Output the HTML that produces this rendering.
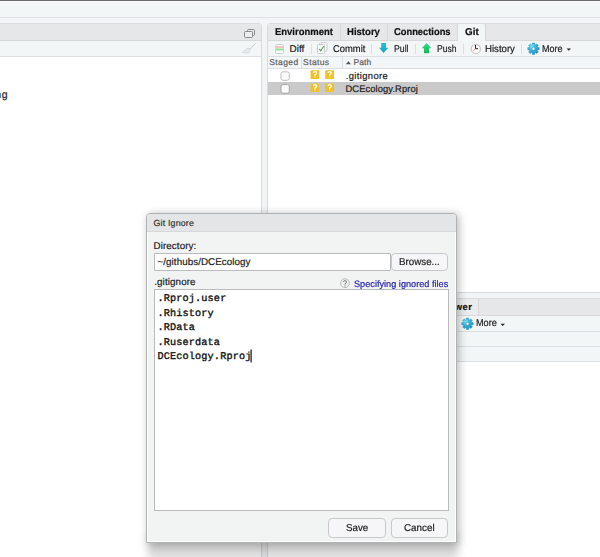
<!DOCTYPE html>
<html><head><meta charset="utf-8">
<style>
*{box-sizing:border-box;margin:0;padding:0}
html,body{width:600px;height:557px;overflow:hidden;background:#fff;font-family:"Liberation Sans",sans-serif;color:#222}
.a{position:absolute}
.t{position:absolute;white-space:pre;text-rendering:geometricPrecision;-webkit-text-stroke:0.2px currentColor}
.sep{position:absolute;width:1px;height:10px;background:#dcdfe1;top:44px}
svg{position:absolute;overflow:visible}
</style></head><body>
<!-- top toolbar -->
<div class="a" style="left:0;top:0;width:600px;height:1px;background:#6a6a6a"></div>
<div class="a" style="left:0;top:1px;width:600px;height:1px;background:#fbfcfc"></div>
<div class="a" style="left:0;top:2px;width:600px;height:15px;background:#f3f6f7"></div>
<div class="a" style="left:0;top:17px;width:600px;height:1px;background:#dfe2e4"></div>
<div class="a" style="left:0;top:18px;width:600px;height:539px;background:#f3f4f6"></div>

<!-- left pane -->
<div class="a" style="left:-4px;top:23px;width:266px;height:540px;border:1px solid #d9dbdd;border-radius:3px;background:#fff;overflow:hidden">
  <div class="a" style="left:0;top:0;width:264px;height:17px;background:#e6e7e8;border-bottom:1px solid #d6d8da"></div>
  <div class="a" style="left:0;top:17px;width:264px;height:16px;background:#f3f6f7;border-bottom:1px solid #dcdfe1"></div>
</div>
<!-- maximize icon -->
<svg style="left:0;top:0" width="600" height="60">
  <rect x="247.5" y="29.5" width="7" height="6" rx="1" fill="none" stroke="#858585" stroke-width="0.95"/>
  <rect x="244.5" y="31.5" width="8" height="6" rx="1" fill="#ededed" stroke="#858585" stroke-width="0.95"/>
  <!-- broom -->
  <path d="M255.8 43.3 L250.3 48.4" stroke="#c9d0d4" stroke-width="1" fill="none"/>
  <path d="M247 48.3 L251 48.6 L248.5 53 L242.2 52.5 Z" fill="#e4e9eb" stroke="#d2d8db" stroke-width="0.8"/>
</svg>

<!-- right pane upper -->
<div class="a" style="left:267px;top:23px;width:340px;height:270px;border:1px solid #d9dbdd;border-radius:3px;background:#fff;overflow:hidden">
  <div class="a" style="left:0;top:0;width:340px;height:17px;background:#e6e7e8;border-bottom:1px solid #d6d8da"></div>
  <!-- tab separators -->
  <div class="a" style="left:72px;top:0;width:1px;height:16px;background:#d6d8da"></div>
  <div class="a" style="left:119px;top:0;width:1px;height:16px;background:#d6d8da"></div>
  <div class="a" style="left:189px;top:0;width:1px;height:16px;background:#d6d8da"></div>
  <div class="a" style="left:190px;top:0;width:27px;height:17px;background:#f3f6f7;border-radius:2px 2px 0 0"></div>
  <div class="a" style="left:217px;top:0;width:1px;height:16px;background:#d6d8da"></div>
  <div class="a" style="left:0;top:17px;width:340px;height:16px;background:#f3f6f7;border-bottom:1px solid #dcdfe1"></div>
  <!-- header -->
  <div class="a" style="left:0;top:33px;width:340px;height:12px;background:#f3f6f7;border-bottom:1px solid #dcdfe1"></div>
  <div class="a" style="left:33px;top:33px;width:1px;height:12px;background:#dcdfe1"></div>
  <div class="a" style="left:74px;top:33px;width:1px;height:12px;background:#dcdfe1"></div>
  <!-- row 2 -->
  <div class="a" style="left:0;top:58px;width:340px;height:13px;background:#cacaca"></div>
</div>
<div class="sep" style="left:311px"></div>
<div class="sep" style="left:371px"></div>
<div class="sep" style="left:415px"></div>
<div class="sep" style="left:463px"></div>
<div class="sep" style="left:521px"></div>
<svg style="left:0;top:0" width="600" height="100">
  <defs>
    <linearGradient id="gPull" x1="0" y1="0" x2="0" y2="1"><stop offset="0" stop-color="#22c4d6"/><stop offset="1" stop-color="#1f9fb6"/></linearGradient>
    <linearGradient id="gPush" x1="0" y1="0" x2="0" y2="1"><stop offset="0" stop-color="#2ee08a"/><stop offset="1" stop-color="#17b257"/></linearGradient>
    <radialGradient id="gGear" cx="0.35" cy="0.3" r="0.8"><stop offset="0" stop-color="#7de6f6"/><stop offset="0.45" stop-color="#38b0da"/><stop offset="1" stop-color="#1d86b8"/></radialGradient>
  </defs>
  <!-- diff -->
  <rect x="275.5" y="44.5" width="8" height="9" rx="1.5" fill="#fff" stroke="#d0d3d5"/>
  <rect x="276" y="46" width="7" height="2" fill="#f6c3c6"/>
  <rect x="276" y="48.5" width="7" height="2" fill="#8edc8e"/>
  <!-- commit -->
  <rect x="319.5" y="42.5" width="7.5" height="9" rx="1" fill="#f4f4f4" stroke="#cfd2d4"/>
  <rect x="317.5" y="44.5" width="7" height="9" rx="1" fill="#fff" stroke="#c8cbcd"/>
  <path d="M319.2 49.2 L320.7 50.9 L323.8 46.3" stroke="#3aa544" stroke-width="1.1" fill="none"/>
  <!-- pull -->
  <path d="M381.2 43 H386 V47.8 H388.2 L383.6 53 L379 47.8 H381.2 Z" fill="url(#gPull)"/>
  <!-- push -->
  <path d="M426.6 43 L431.3 48.2 H429 V53.2 H424 V48.2 H421.8 Z" fill="url(#gPush)"/>
  <!-- clock -->
  <circle cx="475.8" cy="48.9" r="4.6" fill="#fbfbfb" stroke="#c6c6c6" stroke-width="1.2"/>
  <path d="M475.5 45 V48.7 H478" stroke="#222" stroke-width="1" fill="none"/>
  <path d="M475.3 48.9 L473 51.3" stroke="#f08080" stroke-width="0.9" fill="none"/>
  <!-- gear -->
  <g transform="translate(533.5 48.7)">
    <path id="gearp" fill-rule="evenodd" stroke="#2b8fbf" stroke-width="0.5" d="M4.13 -1.20 L5.69 -1.13 L5.69 1.13 L4.13 1.20 L3.77 2.07 L4.82 3.22 L3.22 4.82 L2.07 3.77 L1.20 4.13 L1.13 5.69 L-1.13 5.69 L-1.20 4.13 L-2.07 3.77 L-3.22 4.82 L-4.82 3.22 L-3.77 2.07 L-4.13 1.20 L-5.69 1.13 L-5.69 -1.13 L-4.13 -1.20 L-3.77 -2.07 L-4.82 -3.22 L-3.22 -4.82 L-2.07 -3.77 L-1.20 -4.13 L-1.13 -5.69 L1.13 -5.69 L1.20 -4.13 L2.07 -3.77 L3.22 -4.82 L4.82 -3.22 L3.77 -2.07 Z M1.5 0 A1.5 1.5 0 1 0 -1.5 0 A1.5 1.5 0 1 0 1.5 0 Z" fill="url(#gGear)"/>
  </g>
  <path d="M566.6 48.6 h4.4 l-2.2 2.2 z" fill="#222"/>
  <!-- header sort triangle -->
  <path d="M345.8 64.2 L348.4 61.3 L351 64.2 Z" fill="#555"/>
  <!-- checkboxes -->
  <rect x="281" y="71.8" width="8.3" height="8.5" rx="2" fill="#fbfbfb" stroke="#bdbdbd"/>
  <rect x="281" y="84.6" width="8.3" height="8.6" rx="2" fill="#fdfdfd" stroke="#a4a4a4"/>
  <!-- status icons -->
  <g fill="#f1c12a">
    <rect x="310.5" y="70.3" width="8.8" height="8.7" rx="1"/>
    <rect x="325.2" y="70.3" width="8.8" height="8.7" rx="1"/>
    <rect x="310.5" y="83.4" width="8.8" height="8.7" rx="1"/>
    <rect x="325.2" y="83.4" width="8.8" height="8.7" rx="1"/>
  </g>
  <g fill="none" stroke="#fff" stroke-width="1.25">
    <path d="M313.3 72.8 Q313.6 71.6 315 71.6 Q316.6 71.7 316.6 73 Q316.5 74.2 315 74.7 V75.8"/>
    <path d="M328 72.8 Q328.3 71.6 329.7 71.6 Q331.3 71.7 331.3 73 Q331.2 74.2 329.7 74.7 V75.8"/>
    <path d="M313.3 85.9 Q313.6 84.7 315 84.7 Q316.6 84.8 316.6 86.1 Q316.5 87.3 315 87.8 V88.9"/>
    <path d="M328 85.9 Q328.3 84.7 329.7 84.7 Q331.3 84.8 331.3 86.1 Q331.2 87.3 329.7 87.8 V88.9"/>
  </g>
  <g fill="#fff">
    <rect x="314.5" y="76.6" width="1" height="1"/><rect x="329.2" y="76.6" width="1" height="1"/>
    <rect x="314.5" y="89.7" width="1" height="1"/><rect x="329.2" y="89.7" width="1" height="1"/>
  </g>
</svg>

<!-- right pane lower -->
<div class="a" style="left:267px;top:298px;width:340px;height:270px;border:1px solid #d9dbdd;border-radius:3px;background:#fff;overflow:hidden">
  <div class="a" style="left:0;top:0;width:340px;height:17px;background:#e6e7e8;border-bottom:1px solid #d6d8da"></div>
  <div class="a" style="left:140px;top:0;width:70px;height:16px;background:#ebeced"></div>
  <div class="a" style="left:210px;top:0;width:1px;height:16px;background:#d6d8da"></div>
  <div class="a" style="left:0;top:17px;width:340px;height:16px;background:#f3f6f7;border-bottom:1px solid #dcdfe1"></div>
  <div class="a" style="left:0;top:33px;width:340px;height:15px;background:#f3f6f7;border-bottom:1px solid #dcdfe1"></div>
  <div class="a" style="left:0;top:48px;width:340px;height:15px;background:#f3f6f7;border-bottom:1px solid #dcdfe1"></div>
</div>
<svg style="left:0;top:0" width="600" height="340">
  <defs><radialGradient id="gGear2" cx="0.35" cy="0.3" r="0.8"><stop offset="0" stop-color="#7de6f6"/><stop offset="0.45" stop-color="#38b0da"/><stop offset="1" stop-color="#1d86b8"/></radialGradient></defs>
  <g transform="translate(467.5 323.7)"><path fill-rule="evenodd" fill="url(#gGear2)" stroke="#2b8fbf" stroke-width="0.5" d="M4.13 -1.20 L5.69 -1.13 L5.69 1.13 L4.13 1.20 L3.77 2.07 L4.82 3.22 L3.22 4.82 L2.07 3.77 L1.20 4.13 L1.13 5.69 L-1.13 5.69 L-1.20 4.13 L-2.07 3.77 L-3.22 4.82 L-4.82 3.22 L-3.77 2.07 L-4.13 1.20 L-5.69 1.13 L-5.69 -1.13 L-4.13 -1.20 L-3.77 -2.07 L-4.82 -3.22 L-3.22 -4.82 L-2.07 -3.77 L-1.20 -4.13 L-1.13 -5.69 L1.13 -5.69 L1.20 -4.13 L2.07 -3.77 L3.22 -4.82 L4.82 -3.22 L3.77 -2.07 Z M1.5 0 A1.5 1.5 0 1 0 -1.5 0 A1.5 1.5 0 1 0 1.5 0 Z"/></g>
  <path d="M500.6 323.8 h4.4 l-2.2 2.2 z" fill="#222"/>
</svg>

<div class="t" style="left:274.70px;top:27.18px;font-size:9.9px;line-height:11.38px;font-weight:bold;color:#111;font-family:&quot;Liberation Sans&quot;,monospace;letter-spacing:0.000px;transform:scaleX(0.9586);transform-origin:0 0">Environment</div>
<div class="t" style="left:347.30px;top:27.18px;font-size:9.9px;line-height:11.38px;font-weight:bold;color:#111;font-family:&quot;Liberation Sans&quot;,monospace;letter-spacing:0.000px;transform:scaleX(0.9675);transform-origin:0 0">History</div>
<div class="t" style="left:393.50px;top:27.18px;font-size:9.9px;line-height:11.38px;font-weight:bold;color:#111;font-family:&quot;Liberation Sans&quot;,monospace;letter-spacing:0.000px;transform:scaleX(0.9458);transform-origin:0 0">Connections</div>
<div class="t" style="left:464.50px;top:27.18px;font-size:9.9px;line-height:11.38px;font-weight:bold;color:#111;font-family:&quot;Liberation Sans&quot;,monospace;letter-spacing:0.000px;transform:scaleX(0.9965);transform-origin:0 0">Git</div>
<div class="t" style="left:289.50px;top:43.88px;font-size:9.9px;line-height:11.38px;font-weight:normal;color:#222;font-family:&quot;Liberation Sans&quot;,monospace;letter-spacing:0.026px">Diff</div>
<div class="t" style="left:332.50px;top:43.88px;font-size:9.9px;line-height:11.38px;font-weight:normal;color:#222;font-family:&quot;Liberation Sans&quot;,monospace;letter-spacing:0.000px;transform:scaleX(0.9502);transform-origin:0 0">Commit</div>
<div class="t" style="left:393.50px;top:43.88px;font-size:9.9px;line-height:11.38px;font-weight:normal;color:#222;font-family:&quot;Liberation Sans&quot;,monospace;letter-spacing:0.000px;transform:scaleX(0.8844);transform-origin:0 0">Pull</div>
<div class="t" style="left:436.50px;top:43.88px;font-size:9.9px;line-height:11.38px;font-weight:normal;color:#222;font-family:&quot;Liberation Sans&quot;,monospace;letter-spacing:0.000px;transform:scaleX(0.8686);transform-origin:0 0">Push</div>
<div class="t" style="left:484.50px;top:43.88px;font-size:9.9px;line-height:11.38px;font-weight:normal;color:#222;font-family:&quot;Liberation Sans&quot;,monospace;letter-spacing:0.000px;transform:scaleX(0.9739);transform-origin:0 0">History</div>
<div class="t" style="left:541.90px;top:43.88px;font-size:9.9px;line-height:11.38px;font-weight:normal;color:#222;font-family:&quot;Liberation Sans&quot;,monospace;letter-spacing:0.000px;transform:scaleX(0.9133);transform-origin:0 0">More</div>
<div class="t" style="left:269.20px;top:57.77px;font-size:8.5px;line-height:9.77px;font-weight:normal;color:#606060;font-family:&quot;Liberation Sans&quot;,monospace;letter-spacing:0.412px">Staged</div>
<div class="t" style="left:303.10px;top:57.77px;font-size:8.5px;line-height:9.77px;font-weight:normal;color:#606060;font-family:&quot;Liberation Sans&quot;,monospace;letter-spacing:0.380px">Status</div>
<div class="t" style="left:353.50px;top:57.77px;font-size:8.5px;line-height:9.77px;font-weight:normal;color:#606060;font-family:&quot;Liberation Sans&quot;,monospace;letter-spacing:0.105px">Path</div>
<div class="t" style="left:345.70px;top:70.94px;font-size:9.4px;line-height:10.81px;font-weight:normal;color:#222;font-family:&quot;Liberation Sans&quot;,monospace;letter-spacing:0.392px">.gitignore</div>
<div class="t" style="left:345.50px;top:84.34px;font-size:9.4px;line-height:10.81px;font-weight:normal;color:#222;font-family:&quot;Liberation Sans&quot;,monospace;letter-spacing:0.079px">DCEcology.Rproj</div>
<div class="t" style="left:-4.80px;top:88.93px;font-size:10.5px;line-height:12.07px;font-weight:normal;color:#222;font-family:&quot;Liberation Sans&quot;,monospace;letter-spacing:0.620px">ng</div>
<div class="t" style="left:439.50px;top:301.54px;font-size:9.4px;line-height:10.81px;font-weight:bold;color:#111;font-family:&quot;Liberation Sans&quot;,monospace;letter-spacing:0.473px">Viewer</div>
<div class="t" style="left:475.90px;top:318.48px;font-size:9.9px;line-height:11.38px;font-weight:normal;color:#222;font-family:&quot;Liberation Sans&quot;,monospace;letter-spacing:0.000px;transform:scaleX(0.9266);transform-origin:0 0">More</div>

<!-- dialog -->
<div class="a" style="left:148px;top:534px;width:310px;height:40px;background:linear-gradient(to bottom, rgba(0,0,0,.12) 0px, rgba(0,0,0,.2) 12px, rgba(0,0,0,.19) 16px, rgba(0,0,0,.1) 23px, rgba(0,0,0,0) 32px);filter:blur(4px)"></div>
<div class="a" style="left:146px;top:213px;width:311px;height:330px;border:1px solid #b0b2b4;border-radius:4px 4px 0 0;background:#f2f4f4;box-shadow:2px 1px 8px rgba(0,0,0,0.28), inset 0 0 0 1px rgba(255,255,255,0.85)">
  <div class="a" style="left:0;top:0;width:309px;height:18px;background:#e4e5e7;border-bottom:1px solid #d5d7d9;border-radius:3px 3px 0 0"></div>
  <!-- directory input -->
  <div class="a" style="left:7px;top:39px;width:237px;height:18px;background:#fff;border:1px solid #b9bbbd;border-radius:1px"></div>
  <!-- browse -->
  <div class="a" style="left:244px;top:38.5px;width:57px;height:18px;background:#f6f6f8;border:1px solid #c6c8ca;border-radius:4px"></div>
  <!-- textarea -->
  <div class="a" style="left:7px;top:75px;width:295px;height:222px;background:#fff;border:1px solid #b9bbbd"></div>
  <!-- buttons -->
  <div class="a" style="left:181px;top:304px;width:58px;height:20px;background:#f6f6f8;border:1px solid #c6c8ca;border-radius:4px"></div>
  <div class="a" style="left:244px;top:304px;width:57px;height:20px;background:#f6f6f8;border:1px solid #c6c8ca;border-radius:4px"></div>
</div>
<svg style="left:0;top:0" width="600" height="557">
  <circle cx="345" cy="283.2" r="4.4" fill="#f0f0f0" stroke="#b8bbbd" stroke-width="1"/>
  <path d="M343.4 281.9 Q343.6 280.6 345 280.6 Q346.6 280.7 346.6 282 Q346.5 283.1 345 283.6 V284.6" fill="none" stroke="#777" stroke-width="0.9"/>
  <rect x="344.5" y="285.4" width="1" height="1" fill="#777"/>
  <rect x="250.5" y="349.5" width="1.2" height="13" fill="#111"/>
</svg>
<div class="t" style="left:153.50px;top:218.29px;font-size:8.8px;line-height:10.12px;font-weight:normal;color:#333;font-family:&quot;Liberation Sans&quot;,monospace;letter-spacing:0.195px">Git Ignore</div>
<div class="t" style="left:153.50px;top:241.17px;font-size:9.8px;line-height:11.27px;font-weight:normal;color:#222;font-family:&quot;Liberation Sans&quot;,monospace;letter-spacing:0.097px">Directory:</div>
<div class="t" style="left:157.50px;top:257.07px;font-size:9.8px;line-height:11.27px;font-weight:normal;color:#222;font-family:&quot;Liberation Sans&quot;,monospace;letter-spacing:0.067px">~/githubs/DCEcology</div>
<div class="t" style="left:399.30px;top:256.78px;font-size:10.0px;line-height:11.5px;font-weight:normal;color:#222;font-family:&quot;Liberation Sans&quot;,monospace;letter-spacing:0.000px;transform:scaleX(0.9765);transform-origin:0 0">Browse...</div>
<div class="t" style="left:154.20px;top:276.57px;font-size:9.8px;line-height:11.27px;font-weight:normal;color:#222;font-family:&quot;Liberation Sans&quot;,monospace;letter-spacing:0.120px">.gitignore</div>
<div class="t" style="left:353.50px;top:278.52px;font-size:9.2px;line-height:10.58px;font-weight:normal;color:#2424b0;font-family:&quot;Liberation Sans&quot;,monospace;letter-spacing:0.000px;transform:scaleX(0.9978);transform-origin:0 0">Specifying ignored files</div>
<div class="t" style="left:345.50px;top:522.78px;font-size:10.0px;line-height:11.5px;font-weight:normal;color:#222;font-family:&quot;Liberation Sans&quot;,monospace;letter-spacing:0.000px;transform:scaleX(0.9783);transform-origin:0 0">Save</div>
<div class="t" style="left:404.20px;top:522.78px;font-size:10.0px;line-height:11.5px;font-weight:normal;color:#222;font-family:&quot;Liberation Sans&quot;,monospace;letter-spacing:0.000px;transform:scaleX(0.9830);transform-origin:0 0">Cancel</div>
<div class="t" style="left:157.50px;top:294.32px;font-size:10.2px;line-height:11.73px;font-weight:normal;color:#111;font-family:&quot;Liberation Mono&quot;,monospace;letter-spacing:0.150px;-webkit-text-stroke:0.35px currentColor">.Rproj.user</div>
<div class="t" style="left:157.50px;top:308.82px;font-size:10.2px;line-height:11.73px;font-weight:normal;color:#111;font-family:&quot;Liberation Mono&quot;,monospace;letter-spacing:0.150px;-webkit-text-stroke:0.35px currentColor">.Rhistory</div>
<div class="t" style="left:157.50px;top:323.32px;font-size:10.2px;line-height:11.73px;font-weight:normal;color:#111;font-family:&quot;Liberation Mono&quot;,monospace;letter-spacing:0.150px;-webkit-text-stroke:0.35px currentColor">.RData</div>
<div class="t" style="left:157.50px;top:337.82px;font-size:10.2px;line-height:11.73px;font-weight:normal;color:#111;font-family:&quot;Liberation Mono&quot;,monospace;letter-spacing:0.150px;-webkit-text-stroke:0.35px currentColor">.Ruserdata</div>
<div class="t" style="left:157.50px;top:352.32px;font-size:10.2px;line-height:11.73px;font-weight:normal;color:#111;font-family:&quot;Liberation Mono&quot;,monospace;letter-spacing:0.150px;-webkit-text-stroke:0.35px currentColor">DCEcology.Rproj</div>
</body></html>
